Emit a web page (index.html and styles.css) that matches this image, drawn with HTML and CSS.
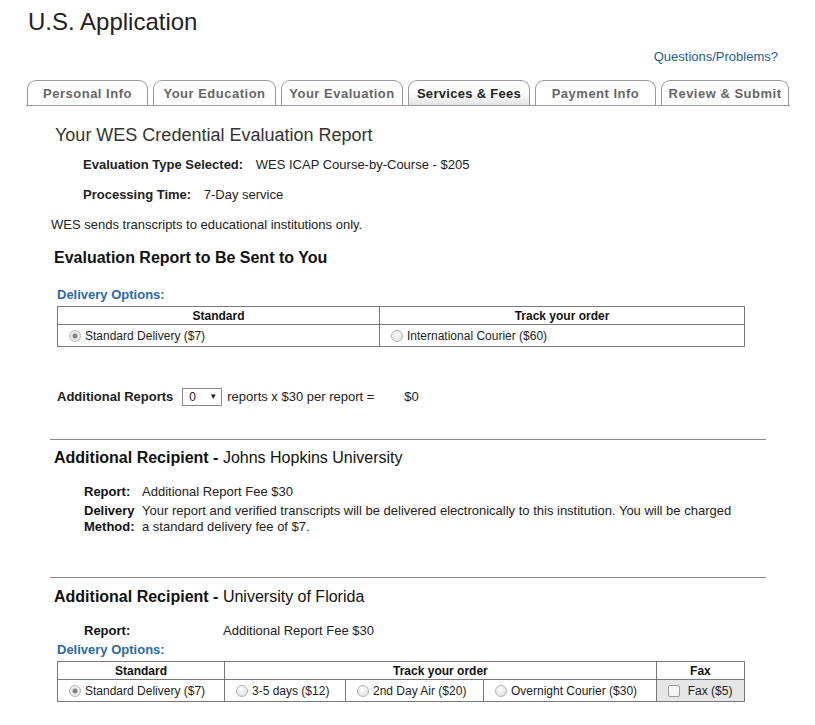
FILE: index.html
```html
<!DOCTYPE html>
<html lang="en">
<head>
    <meta charset="UTF-8">
    <meta name="viewport" content="width=device-width, initial-scale=1.0">
    <title>U.S. Application</title>
    <link rel="stylesheet" href="styles.css">
</head>
<body>
    <div class="page">
        <h1>U.S. Application</h1>
        <div class="help"><a href="#">Questions/Problems?</a></div>

        <div class="tabs">
            <a href="#" class="tab">Personal Info</a>
            <a href="#" class="tab">Your Education</a>
            <a href="#" class="tab">Your Evaluation</a>
            <a href="#" class="tab active">Services &amp; Fees</a>
            <a href="#" class="tab">Payment Info</a>
            <a href="#" class="tab">Review &amp; Submit</a>
        </div>

        <div class="content">
            <h2 class="report-title">Your WES Credential Evaluation Report</h2>
            <div class="summary">
                <p><b>Evaluation Type Selected:</b> <span>WES ICAP Course-by-Course - $205</span></p>
                <p class="summary-gap"><b>Processing Time:</b> <span>7-Day service</span></p>
            </div>
            <p class="note">WES sends transcripts to educational institutions only.</p>

            <h3 class="section-title">Evaluation Report to Be Sent to You</h3>
            <div class="options-label">Delivery Options:</div>
            <table class="options">
                <tr>
                    <th>Standard</th>
                    <th>Track your order</th>
                </tr>
                <tr>
                    <td class="half"><label><input type="radio" name="self-delivery" checked> Standard Delivery ($7)</label></td>
                    <td><label><input type="radio" name="self-delivery"> International Courier ($60)</label></td>
                </tr>
            </table>

            <div class="extra-reports">
                <b>Additional Reports</b>
                <span class="select-box">0<span class="arrow">&#9660;</span></span>
                <span>reports x $30 per report =</span>
                <span class="total">$0</span>
            </div>

            <hr>

            <h3 class="section-title recipient"><b>Additional Recipient -</b> Johns Hopkins University</h3>
            <div class="details">
                <div class="row">
                    <b class="key">Report:</b>
                    <span>Additional Report Fee $30</span>
                </div>
                <div class="row">
                    <b class="key">Delivery Method:</b>
                    <span>Your report and verified transcripts will be delivered electronically to this institution. You will be charged a standard delivery fee of $7.</span>
                </div>
            </div>

            <hr class="second">

            <h3 class="section-title recipient next"><b>Additional Recipient -</b> University of Florida</h3>
            <div class="details">
                <div class="row">
                    <b class="key key-wide">Report:</b>
                    <span>Additional Report Fee $30</span>
                </div>
            </div>
            <div class="options-label tight">Delivery Options:</div>
            <table class="options">
                <tr>
                    <th>Standard</th>
                    <th colspan="3">Track your order</th>
                    <th>Fax</th>
                </tr>
                <tr>
                    <td class="c1"><label><input type="radio" name="uf-delivery" checked> Standard Delivery ($7)</label></td>
                    <td class="c2"><label><input type="radio" name="uf-delivery"> 3-5 days ($12)</label></td>
                    <td class="c3"><label><input type="radio" name="uf-delivery"> 2nd Day Air ($20)</label></td>
                    <td class="c4"><label><input type="radio" name="uf-delivery"> Overnight Courier ($30)</label></td>
                    <td class="fax"><label><input type="checkbox"> Fax ($5)</label></td>
                </tr>
            </table>
        </div>
    </div>
</body>
</html>
```

FILE: styles.css
```css
body {
    font-family: Arial, "Liberation Sans", sans-serif;
    margin: 0;
    padding: 0;
    background-color: #fff;
    color: #222;
}
.page {
    width: 764px;
    margin-left: 26px;
}
h1 {
    margin: 8px 0 0 2px;
    font-size: 24px;
    font-weight: normal;
    line-height: 28px;
    color: #222;
}
.help {
    margin-top: 13px;
    padding-right: 12px;
    text-align: right;
    font-size: 13px;
    line-height: 16px;
}
.help a {
    color: #1d5c96;
    text-decoration: none;
}

/* tab strip */
.tabs {
    display: flex;
    gap: 5px;
    margin-top: 15px;
    padding-left: 1px;
    border-bottom: 1px solid #999;
}
.tab {
    width: 121px;
    height: 25px;
    box-sizing: border-box;
    border: 1px solid #999;
    border-bottom: none;
    border-radius: 9px 9px 0 0;
    text-align: center;
    font-size: 13px;
    font-weight: bold;
    letter-spacing: 0.5px;
    line-height: 25px;
    color: #666;
    text-decoration: none;
}
.tab:nth-child(2) { width: 123px; }
.tab:nth-child(3) { width: 122px; }
.tab:nth-child(4) { width: 122px; }
.tab:nth-child(5) { width: 121px; }
.tab:nth-child(6) { width: 128px; }
.tab.active {
    color: #222;
    letter-spacing: 0.3px;
    background: linear-gradient(#fff, #fff 45%, #e4e4e4);
}

.content {
    padding-left: 25px;
    width: 715px;
}
.report-title {
    margin: 18px 0 0 4px;
    font-size: 18px;
    font-weight: normal;
    line-height: 22px;
    color: #333;
}
.summary {
    padding-left: 32px;
    margin-top: 10px;
}
.summary p {
    margin: 0;
    font-size: 13px;
    line-height: 18px;
}
.summary b {
    margin-right: 9px;
}
.summary-gap {
    margin-top: 12px !important;
}
.note {
    margin: 12px 0 0;
    font-size: 13px;
    line-height: 18px;
}
.section-title {
    margin: 14px 0 0 3px;
    font-size: 16px;
    line-height: 20px;
    color: #111;
}
.options-label {
    margin: 19px 0 0 6px;
    font-size: 13px;
    font-weight: bold;
    line-height: 16px;
    color: #2a6aa5;
}
.options-label.tight {
    margin-top: 3px;
}
.options {
    margin: 3px 0 0 6px;
    width: 688px;
    border-collapse: collapse;
    font-size: 12px;
}
.options th {
    border: 1px solid #777;
    height: 17px;
    padding: 0;
    font-weight: bold;
    color: #111;
}
.options td {
    border: 1px solid #777;
    height: 21px;
    padding: 0 4px;
    color: #222;
}
.options .half {
    width: 313px;
}
.options label {
    display: flex;
    align-items: center;
    gap: 4px;
    white-space: nowrap;
}
input[type="radio"] {
    appearance: none;
    margin: 0 0 0 7px;
    width: 12px;
    height: 12px;
    border: 1px solid #b4b4b4;
    border-radius: 50%;
    box-sizing: border-box;
    background: radial-gradient(circle at 40% 35%, #fff, #e2e2e2 75%);
}
input[type="radio"]:checked {
    background: radial-gradient(circle, #777 0, #888 2px, #e6e6e6 3px, #f3f3f3 6px);
}
input[type="checkbox"] {
    appearance: none;
    margin: 0 4px 0 7px;
    width: 12px;
    height: 12px;
    border: 1px solid #999;
    border-radius: 2px;
    box-sizing: border-box;
    background: #f6f6f6;
}
.options .c1 { width: 158px; }
.options .c2 { width: 112px; }
.options .c3 { width: 129px; }
.options .fax {
    background-color: #e6e6e6;
}

.extra-reports {
    display: flex;
    align-items: center;
    margin: 41px 0 0 6px;
    font-size: 13px;
    line-height: 18px;
}
.extra-reports b {
    margin-right: 9px;
}
.select-box {
    display: inline-flex;
    justify-content: space-between;
    align-items: center;
    width: 40px;
    height: 18px;
    box-sizing: border-box;
    padding: 0 4px 0 6px;
    margin-right: 5px;
    border: 1px solid #888;
    font-size: 12px;
}
.arrow {
    font-size: 8px;
}
.extra-reports .total {
    margin-left: 30px;
}
hr {
    margin: 33px 0 0 -1px;
    width: 716px;
    border: none;
    border-top: 1px solid #888;
}
hr.second {
    margin-top: 42px;
}
.recipient {
    margin-top: 8px;
}
.recipient.next {
    margin-top: 9px;
}
.recipient b {
    font-weight: bold;
}
.section-title.recipient {
    font-weight: normal;
}
.details {
    margin: 16px 0 0 33px;
    font-size: 13px;
    line-height: 16px;
}
.row {
    display: flex;
    margin-bottom: 3px;
}
.key {
    flex: 0 0 58px;
    color: #111;
}
.key-wide {
    flex-basis: 139px;
}
.row span {
    width: 595px;
}
```
